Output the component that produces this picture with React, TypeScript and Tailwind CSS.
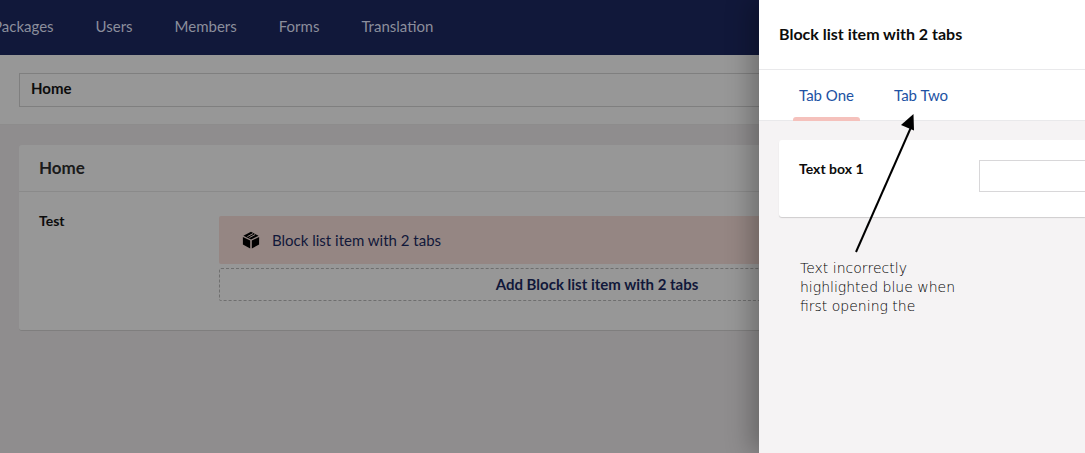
import React from 'react';

const navItems = ['Packages', 'Users', 'Members', 'Forms', 'Translation'];

const App: React.FC = () => {
  return (
    <div className="relative w-[1085px] h-[453px] overflow-hidden bg-[#8f8d8e] font-['Lato','Noto_Sans',sans-serif]">
      {/* Top nav */}
      <div className="flex items-center gap-[42px] h-[55px] pb-[2px] -ml-[7px] bg-[#11183a] text-[15px] text-[#8b8e9c]">
        {navItems.map((item) => (
          <span key={item}>{item}</span>
        ))}
      </div>

      {/* Name bar */}
      <div className="h-[70px] pt-[18px] px-[19px] bg-[#979797] border-b border-[#8d8c8c]">
        <div className="w-[1100px] h-[34px] pl-[11px] border border-[#7f7f7f] text-[15px] leading-[29px] font-bold text-[#0c0c0c]">
          Home
        </div>
      </div>

      {/* Content card */}
      <div className="mt-[20px] ml-[19px] w-[1000px] h-[186px] rounded-[3px] bg-[#979797] border-b border-[#7f7e7e]">
        <div className="h-[47px] pl-[20px] border-b border-[#8a8a8a] text-[17px] leading-[46px] font-bold text-[#1b1b1b]">
          Home
        </div>
        <div className="flex pt-[24px] pl-[20px]">
          <div className="w-[180px] -mt-[5px] text-[14px] leading-[20px] font-bold text-[#0c0c0c]">Test</div>
          <div className="flex flex-col w-[756px]">
            <div className="flex items-center h-[48px] pl-[23px] rounded-[2px] bg-[#958683] text-[15px] text-[#11183a]">
              <svg className="w-[18px] h-[18px] mr-[12px]" viewBox="0 0 18 18">
                <path d="M9 .8 16.6 4.8 9 8.4 1.4 4.8Z" fill="#000" />
                <path d="M.9 6 8.2 9.6V17.4L.9 13.6Z" fill="#000" />
                <path d="M17.1 6 9.8 9.6V17.4L17.1 13.6Z" fill="#000" />
                <path d="M5.4 5.6 11 2.6" stroke="#958683" strokeWidth="1" />
                <path d="M7.4 6.6 13 3.6" stroke="#958683" strokeWidth="1" />
              </svg>
              Block list item with 2 tabs
            </div>
            <div className="flex items-center justify-center h-[33px] mt-[4px] border border-dashed border-[#6f6f6f] rounded-[2px] text-[15px] font-bold text-[#11183a]">
              Add Block list item with 2 tabs
            </div>
          </div>
        </div>
      </div>

      {/* Side panel */}
      <div className="absolute top-0 right-0 bottom-0 w-[326px] flex flex-col bg-[#f5f3f4] shadow-[-8px_0_24px_rgba(0,0,0,0.28)]">
        <div className="h-[70px] pl-[20px] bg-white border-b border-[#e9e9eb] text-[16px] leading-[68px] font-bold text-[#0c0c0c]">
          Block list item with 2 tabs
        </div>
        <div className="flex h-[51px] pl-[40px] gap-[40px] bg-white border-b border-[#e9e9eb] text-[15px] text-[#2152a3]">
          <div className="relative leading-[50px]">
            Tab One
            <div className="absolute -left-[6px] -right-[6px] bottom-[-1px] h-[4px] rounded-t-[3px] bg-[#f5c1bc]" />
          </div>
          <div className="leading-[50px]">Tab Two</div>
        </div>
        <div className="flex h-[77px] mt-[19px] ml-[20px] pt-[20px] pl-[20px] bg-white rounded-l-[3px] shadow-[0_1px_1px_rgba(0,0,0,0.16)]">
          <div className="w-[180px] text-[14px] leading-[18px] font-bold text-[#0c0c0c]">Text box 1</div>
          <div className="flex-1 h-[32px] border border-[#d8d7d9] border-r-0" />
        </div>
      </div>

      {/* Annotation */}
      <svg className="absolute left-[840px] top-[105px] w-[90px] h-[155px]" viewBox="840 105 90 155">
        <path d="M856 252 912 125" stroke="#000" strokeWidth="2" fill="none" />
        <path d="M913.5 114 901 125 914 130.5Z" fill="#000" />
      </svg>
      <div className="absolute left-[800px] top-[259px] font-['DejaVu_Sans',sans-serif] font-extralight text-[14px] leading-[19px] text-black whitespace-pre-line">
        {'Text incorrectly\nhighlighted blue when\nfirst opening the'}
      </div>
    </div>
  );
};

export default App;
